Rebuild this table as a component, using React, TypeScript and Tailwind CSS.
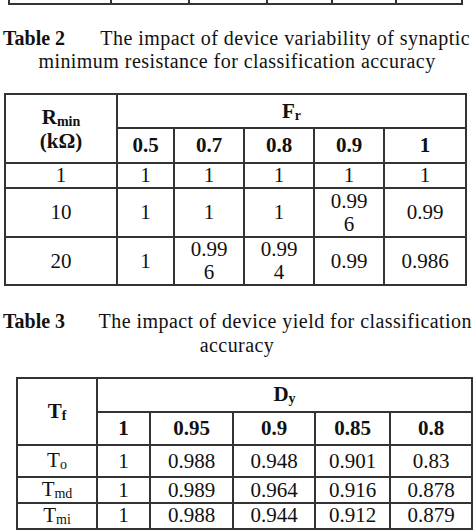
import React from "react";

const cell = "border-2 border-[#333] p-0 text-center align-middle";

function Sub({ children }: { children: React.ReactNode }) {
  return <span className="text-[14px] leading-none align-[-2px]">{children}</span>;
}

const topCols = [104, 78, 78, 65, 64, 66];

const t2Rows: { label: string; vals: React.ReactNode[]; h: string }[] = [
  { label: "1", vals: ["1", "1", "1", "1", "1"], h: "h-[23px]" },
  {
    label: "10",
    vals: ["1", "1", "1", <>0.99<br />6</>, "0.99"],
    h: "h-[49px]",
  },
  {
    label: "20",
    vals: ["1", <>0.99<br />6</>, <>0.99<br />4</>, "0.99", "0.986"],
    h: "h-[48px]",
  },
];

const t3Rows = [
  { t: "T", s: "o", vals: ["1", "0.988", "0.948", "0.901", "0.83"], h: "h-[32px]" },
  { t: "T", s: "md", vals: ["1", "0.989", "0.964", "0.916", "0.878"], h: "h-[26px]" },
  { t: "T", s: "mi", vals: ["1", "0.988", "0.944", "0.912", "0.879"], h: "h-[26px]" },
];

export default function App() {
  return (
    <div className="w-[474px] h-[530px] overflow-hidden bg-white text-[#111] font-['Liberation_Serif','Times_New_Roman',serif]">
      {/* tail of the previous table */}
      <div className="ml-[8px] flex h-[5px]">
        {topCols.map((w, i) => (
          <div
            key={i}
            style={{ width: w }}
            className={`h-[5px] border-b-2 border-r-2 border-[#333] ${i === 0 ? "border-l-2" : ""}`}
          />
        ))}
      </div>

      {/* Table 2 caption */}
      <div className="mt-[22px] text-[20px] leading-[23px]">
        <div className="flex justify-between pl-[3px] pr-[4px]">
          <span className="font-bold">Table 2</span>
          <span className="tracking-[0.45px]">The impact of device variability of synaptic</span>
        </div>
        <div className="text-center tracking-[0.45px]">minimum resistance for classification accuracy</div>
      </div>

      {/* Table 2 */}
      <table className="mt-[20px] ml-[4px] w-[463px] table-fixed border-collapse text-[21px] leading-[23px]">
        <colgroup>
          <col className="w-[112px]" />
          <col className="w-[57px]" />
          <col className="w-[70px]" />
          <col className="w-[70px]" />
          <col className="w-[70px]" />
          <col className="w-[82px]" />
        </colgroup>
        <tbody>
          <tr className="h-[34px] font-bold">
            <td rowSpan={2} className={`${cell} leading-[24px]`}>
              R<Sub>min</Sub>
              <br />
              (kΩ)
            </td>
            <td colSpan={5} className={cell}>
              F<Sub>r</Sub>
            </td>
          </tr>
          <tr className="h-[35px] font-bold">
            {["0.5", "0.7", "0.8", "0.9", "1"].map((v) => (
              <td key={v} className={cell}>
                {v}
              </td>
            ))}
          </tr>
          {t2Rows.map((r) => (
            <tr key={r.label} className={r.h}>
              <td className={cell}>{r.label}</td>
              {r.vals.map((v, i) => (
                <td key={i} className={cell}>
                  {v}
                </td>
              ))}
            </tr>
          ))}
        </tbody>
      </table>

      {/* Table 3 caption */}
      <div className="mt-[23px] text-[20px] leading-[24px]">
        <div className="flex justify-between pl-[3px] pr-[2px]">
          <span className="font-bold">Table 3</span>
          <span className="tracking-[0.45px]">The impact of device yield for classification</span>
        </div>
        <div className="text-center tracking-[0.45px]">accuracy</div>
      </div>

      {/* Table 3 */}
      <table className="mt-[20px] ml-[16px] w-[457px] table-fixed border-collapse text-[21px] leading-[21px]">
        <colgroup>
          <col className="w-[80px]" />
          <col className="w-[53px]" />
          <col className="w-[83px]" />
          <col className="w-[82px]" />
          <col className="w-[75px]" />
          <col className="w-[82px]" />
        </colgroup>
        <tbody>
          <tr className="h-[34px] font-bold">
            <td rowSpan={2} className={cell}>
              T<Sub>f</Sub>
            </td>
            <td colSpan={5} className={cell}>
              D<Sub>y</Sub>
            </td>
          </tr>
          <tr className="h-[33px] font-bold">
            {["1", "0.95", "0.9", "0.85", "0.8"].map((v) => (
              <td key={v} className={cell}>
                {v}
              </td>
            ))}
          </tr>
          {t3Rows.map((r, ri) => (
            <tr key={r.s} className={r.h}>
              <td className={`${cell} ${ri === 2 ? "border-b-[3px]" : ""}`}>
                {r.t}
                <Sub>{r.s}</Sub>
              </td>
              {r.vals.map((v, i) => (
                <td key={i} className={`${cell} ${ri === 2 ? "border-b-[3px]" : ""}`}>
                  {v}
                </td>
              ))}
            </tr>
          ))}
        </tbody>
      </table>
    </div>
  );
}
